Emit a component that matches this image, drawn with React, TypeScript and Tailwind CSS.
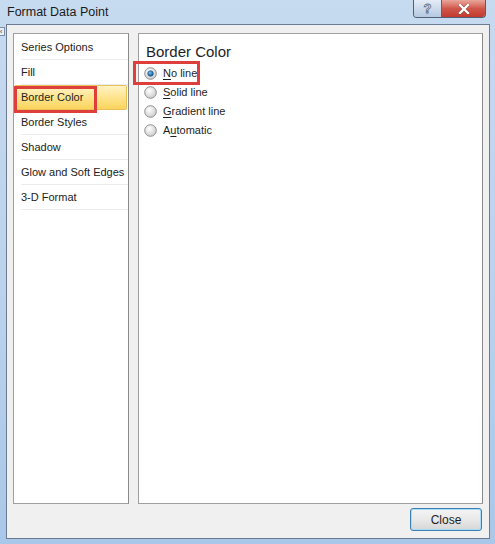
import React from 'react'

const font = { fontFamily: '"Liberation Sans", Arial, sans-serif' }

const categories = [
  'Series Options',
  'Fill',
  'Border Color',
  'Border Styles',
  'Shadow',
  'Glow and Soft Edges',
  '3-D Format',
]

const options = [
  { pre: '', key: 'N', post: 'o line', checked: true },
  { pre: '', key: 'S', post: 'olid line', checked: false },
  { pre: '', key: 'G', post: 'radient line', checked: false },
  { pre: 'A', key: 'u', post: 'tomatic', checked: false },
]

function Radio({ checked }: { checked: boolean }) {
  return (
    <svg width="13" height="13" viewBox="0 0 13 13" className="shrink-0">
      <defs>
        <radialGradient id="rg" cx="40%" cy="35%" r="70%">
          <stop offset="0%" stopColor="#ffffff" />
          <stop offset="100%" stopColor="#c9c9c9" />
        </radialGradient>
        <radialGradient id="dot" cx="40%" cy="35%" r="70%">
          <stop offset="0%" stopColor="#6fc3f0" />
          <stop offset="100%" stopColor="#0f4f8a" />
        </radialGradient>
      </defs>
      <circle cx="6.5" cy="6.5" r="5.8" fill="url(#rg)" stroke="#8f8f8f" strokeWidth="1" />
      {checked && <circle cx="6.5" cy="6.5" r="2.8" fill="url(#dot)" stroke="#1d4b7a" strokeWidth="0.6" />}
    </svg>
  )
}

export default function App() {
  return (
    <div
      className="relative w-[495px] h-[544px] overflow-hidden bg-gradient-to-b from-[#c6daf0] via-[#bcd3ec] to-[#a9c7e9] flex flex-col"
      style={font}
    >
      {/* Title bar */}
      <div className="h-[24px] flex items-start justify-between shrink-0">
        <div className="pl-[7px] pt-[3px] text-[12.5px] text-[#1b1b1b]">Format Data Point</div>
        <div className="mr-[9px] flex h-[18px] border border-t-0 border-[#4f5f78] rounded-b-[4px] overflow-hidden">
          <div className="w-[28px] flex items-center justify-center bg-gradient-to-b from-[#e4ecf6] to-[#b6c9e0] border-r border-[#55667f]">
            <span className="text-[13px] font-bold text-[#eef3f9] leading-none [-webkit-text-stroke:0.8px_#5d6e86]">?</span>
          </div>
          <div className="w-[43px] flex items-center justify-center bg-gradient-to-b from-[#e9a79c] via-[#d0574b] to-[#c13b2e]">
            <svg width="12" height="10" viewBox="0 0 12 10">
              <path d="M2 1 L10 9 M10 1 L2 9" stroke="#3d1510" strokeWidth="3.4" strokeLinecap="square" opacity="0.35" />
              <path d="M2 1 L10 9 M10 1 L2 9" stroke="#ffffff" strokeWidth="2.4" strokeLinecap="square" />
            </svg>
          </div>
        </div>
      </div>

      {/* Tiny edge marker of a window behind */}
      <div className="absolute left-0 top-[27px] w-[5px] h-[9px] bg-[#e8eef5] border border-l-0 border-[#7d8ea3] text-[7px] leading-[7px] text-[#333]">‹</div>

      {/* Content */}
      <div className="ml-[6px] mr-[5px] h-[515px] border border-[#6b7c92] bg-[#f0f0f0] flex flex-col pt-[8px] px-[6px]">
        <div className="flex gap-[9px] h-[471px]">
          {/* Category list */}
          <div className="relative w-[116px] h-full bg-white border border-[#a0a0a0] border-r-[#8a8a8a] flex flex-col pt-[1px]">
            {categories.map((c) =>
              c === 'Border Color' ? (
                <div
                  key={c}
                  className="h-[25px] flex items-center pl-[6px] text-[11px] text-[#1e1e1e] whitespace-nowrap bg-gradient-to-b from-[#fff3c4] via-[#ffe48c] to-[#fbd45c] border border-[#e9c15a] rounded-[2px] mr-[1px]"
                >
                  {c}
                </div>
              ) : (
                <div key={c} className="h-[25px] flex items-center pl-[7px] text-[11px] text-[#222] whitespace-nowrap">
                  <span className="flex-1 h-full flex items-center border-b border-[#ececec]">{c}</span>
                </div>
              )
            )}
            <div className="absolute left-0 top-[52px] w-[83px] h-[27px] border-[3px] border-[#df3f3b]" />
          </div>

          {/* Options panel */}
          <div className="relative flex-1 h-full bg-white border border-[#a0a0a0] border-r-[#8a8a8a] pl-[7px] pt-[8px]">
            <div className="text-[15px] text-[#1e1e1e] leading-[20px]">Border Color</div>
            <div className="mt-[5px] flex flex-col gap-[6px] ml-[-2px]">
              {options.map((o) => (
                <div key={o.key} className="flex items-center gap-[6px] h-[13px]">
                  <Radio checked={o.checked} />
                  <span className="text-[11px] text-[#1e1e1e] leading-none">
                    {o.pre}
                    <span className="underline underline-offset-[2px]">{o.key}</span>
                    {o.post}
                  </span>
                </div>
              ))}
            </div>
            <div className="absolute left-[-6px] top-[27px] w-[67px] h-[24px] border-[3px] border-[#df3f3b]" />
          </div>
        </div>

        {/* Button row */}
        <div className="flex justify-end pr-[1px] mt-[4px]">
          <button className="w-[72px] h-[23px] rounded-[3px] border border-[#3c7fb1] bg-gradient-to-b from-[#f4f4f4] via-[#e9e9e9] to-[#d6d6d6] text-[12px] text-[#1e1e1e] shadow-[inset_0_0_0_1px_#a8dcf8]">
            Close
          </button>
        </div>
      </div>
    </div>
  )
}
